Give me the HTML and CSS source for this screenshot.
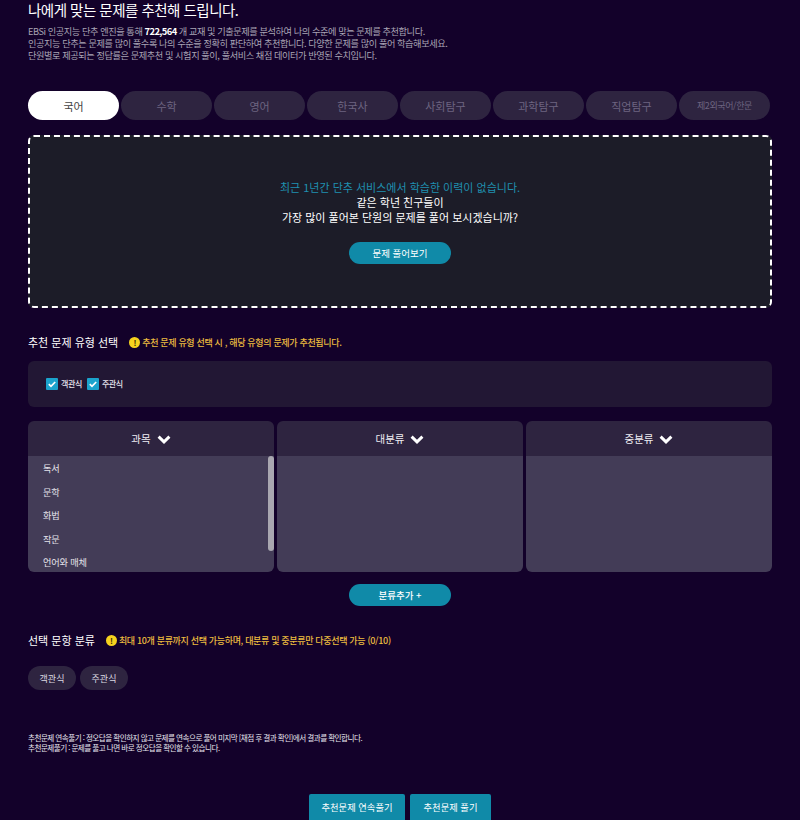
FILE: index.html
```html
<!DOCTYPE html>
<html lang="ko">
<head>
<meta charset="utf-8">
<title>문제 추천</title>
<link rel="stylesheet" href="styles.css">
</head>
<body>
<main class="page">
  <h1 class="title">나에게 맞는 문제를 추천해 드립니다.</h1>
  <div class="intro">
    <p>EBSi 인공지능 단추 엔진을 통해 <strong>722,564</strong> 개 교재 및 기출문제를 분석하여 나의 수준에 맞는 문제를 추천합니다.</p>
    <p>인공지능 단추는 문제를 많이 풀수록 나의 수준을 정확히 판단하여 추천합니다. 다양한 문제를 많이 풀어 학습해보세요.</p>
    <p>단원별로 제공되는 정답률은 문제추천 및 시험지 풀이, 풀서비스 채점 데이터가 반영된 수치입니다.</p>
  </div>
  <nav class="tabs">
    <a class="tab active">국어</a>
    <a class="tab">수학</a>
    <a class="tab">영어</a>
    <a class="tab">한국사</a>
    <a class="tab">사회탐구</a>
    <a class="tab">과학탐구</a>
    <a class="tab">직업탐구</a>
    <a class="tab small">제2외국어/한문</a>
  </nav>
  <section class="notice">
    <p class="notice-hi">최근 1년간 단추 서비스에서 학습한 이력이 없습니다.</p>
    <p>같은 학년 친구들이</p>
    <p>가장 많이 풀어본 단원의 문제를 풀어 보시겠습니까?</p>
    <a class="pill-btn notice-btn">문제 풀어보기</a>
  </section>
  <div class="section-head head-type">
    <h2>추천 문제 유형 선택</h2>
    <span class="warn"><i class="warn-ico">!</i>추천 문제 유형 선택 시 , 해당 유형의 문제가 추천됩니다.</span>
  </div>
  <div class="types">
    <span class="check"><svg viewBox="0 0 12 12"><rect width="12" height="12" rx="1" fill="#1ba3cc"/><path d="M2.8 6.2 5 8.3 9.2 4" fill="none" stroke="#fff" stroke-width="1.7"/></svg>객관식</span>
    <span class="check"><svg viewBox="0 0 12 12"><rect width="12" height="12" rx="1" fill="#1ba3cc"/><path d="M2.8 6.2 5 8.3 9.2 4" fill="none" stroke="#fff" stroke-width="1.7"/></svg>주관식</span>
  </div>
  <div class="columns">
    <div class="col">
      <div class="col-head">과목<svg class="chev" viewBox="0 0 14 10"><path d="M1.6 2.6 7 7.8 12.4 2.6" fill="none" stroke="#fff" stroke-width="3"/></svg></div>
      <div class="col-body">
        <ul class="list">
          <li>독서</li>
          <li>문학</li>
          <li>화법</li>
          <li>작문</li>
          <li>언어와 매체</li>
        </ul>
        <span class="scroll-thumb"></span>
      </div>
    </div>
    <div class="col">
      <div class="col-head">대분류<svg class="chev" viewBox="0 0 14 10"><path d="M1.6 2.6 7 7.8 12.4 2.6" fill="none" stroke="#fff" stroke-width="3"/></svg></div>
      <div class="col-body"></div>
    </div>
    <div class="col">
      <div class="col-head">중분류<svg class="chev" viewBox="0 0 14 10"><path d="M1.6 2.6 7 7.8 12.4 2.6" fill="none" stroke="#fff" stroke-width="3"/></svg></div>
      <div class="col-body"></div>
    </div>
  </div>
  <div class="add-row"><a class="pill-btn add-btn">분류추가 +</a></div>
  <div class="section-head head-sel">
    <h2>선택 문항 분류</h2>
    <span class="warn"><i class="warn-ico">!</i>최대 10개 분류까지 선택 가능하며, 대분류 및 중분류만 다중선택 가능 (0/10)</span>
  </div>
  <div class="chips">
    <span class="chip">객관식</span>
    <span class="chip">주관식</span>
  </div>
  <div class="notes">
    <p>추천문제 연속풀기 : 정오답을 확인하지 않고 문제를 연속으로 풀어 미지막 [채점 후 결과 확인]에서 결과를 확인합니다.</p>
    <p>추천문제풀기 : 문제를 풀고 나면 바로 정오답을 확인할 수 있습니다.</p>
  </div>
  <div class="actions">
    <a class="action wide">추천문제 연속풀기</a>
    <a class="action">추천문제 풀기</a>
  </div>
</main>
</body>
</html>
```
FILE: styles.css
```css
* { box-sizing: border-box; }
html, body { margin: 0; height: 820px; overflow: hidden; }
body {
  background: #13012a;
  color: #fff;
  font-family: "Noto Sans CJK KR", "Noto Sans", sans-serif;
}
p, h1, h2, ul { margin: 0; padding: 0; }
.page { width: 744px; margin-left: 28px; }
.title { font-size: 14.5px; font-weight: 400; line-height: 20px; letter-spacing: -0.5px; }
.intro { margin-top: 5px; font-size: 9.2px; line-height: 12px; color: #aaa5b5; letter-spacing: -0.43px; }
.intro strong { color: #fff; font-weight: 700; font-size: 9.4px; letter-spacing: -0.6px; }
.tabs { display: flex; gap: 2px; margin-top: 30px; }
.tab {
  width: 91px; height: 29px; border-radius: 15px; background: #2e2440;
  color: #6d6580; font-size: 11px; display: flex; align-items: center; justify-content: center;
}
.tab.active { background: #fff; color: #444; }
.tab.small { font-size: 9px; letter-spacing: -0.4px; }
.notice {
  margin-top: 15px; height: 173px; border: 2px dashed #fff; border-radius: 6px;
  background: #1c1c28; text-align: center; font-size: 11px; line-height: 15px;
  padding-top: 43px; display: flex; flex-direction: column; align-items: center;
}
.notice-hi { color: #1f90b0; }
.pill-btn {
  width: 102px; height: 22px; border-radius: 11px; background: #108aa8; color: #fff;
  font-size: 9.5px; display: flex; align-items: center; justify-content: center;
}
.notice-btn { margin-top: 17px; }
.add-btn { font-weight: 500; }
.section-head { display: flex; align-items: center; }
.section-head h2 { font-size: 11px; font-weight: 400; line-height: 18px; }
.head-type { margin-top: 25px; }
.head-sel { margin-top: 25px; }
.warn { display: flex; align-items: center; margin-left: 11px; color: #ecbc3f; font-size: 9px; font-weight: 500; letter-spacing: -0.33px; }
.warn-ico {
  width: 11px; height: 11px; border-radius: 50%; background: #f6d21e; color: #3a2c00;
  font-size: 8px; font-style: normal; font-weight: 700; line-height: 11px; text-align: center; margin-right: 2px;
}
.types {
  margin-top: 10px; height: 46px; border-radius: 6px; background: #221734;
  display: flex; align-items: flex-start; gap: 5px; padding: 17px 0 0 18px;
}
.check { display: flex; align-items: center; gap: 3px; font-size: 8px; font-weight: 500; line-height: 12px; letter-spacing: -0.4px; color: #e8e6ee; }
.check svg { width: 12px; height: 12px; }
.columns { display: flex; gap: 3px; margin-top: 14px; }
.col { flex: 1; height: 151px; border-radius: 6px; overflow: hidden; display: flex; flex-direction: column; }
.col-head {
  height: 35px; background: #2e2440; font-size: 10.5px; color: #f0eef4;
  display: flex; align-items: center; justify-content: center; gap: 6px;
}
.chev { width: 14px; height: 10px; }
.col-body { position: relative; flex: 1; background: #433c57; overflow: hidden; }
.list { list-style: none; padding: 1px 0 0 15px; }
.list li { height: 23.5px; font-size: 9.2px; line-height: 23.5px; color: #e6e4ec; letter-spacing: -0.2px; }
.scroll-thumb { position: absolute; right: 0; top: 0; width: 6px; height: 95px; border-radius: 3px; background: #a9a7b0; }
.add-row { display: flex; justify-content: center; margin-top: 12px; }
.chips { display: flex; gap: 4px; margin-top: 17px; }
.chip {
  width: 48px; height: 24px; border-radius: 12px; background: #2e2440; color: #dcdae2;
  font-size: 9px; display: flex; align-items: center; justify-content: center;
}
.notes { margin-top: 43px; font-size: 7.6px; line-height: 10px; letter-spacing: -0.54px; color: #e8e6ee; }
.actions { display: flex; justify-content: center; gap: 5px; margin-top: 41px; }
.action {
  width: 81px; height: 26px; background: #108aa8; color: #fff; font-size: 9.3px;
  display: flex; align-items: center; justify-content: center; border-radius: 2px 2px 0 0;
}
.action.wide { width: 96px; }
```
